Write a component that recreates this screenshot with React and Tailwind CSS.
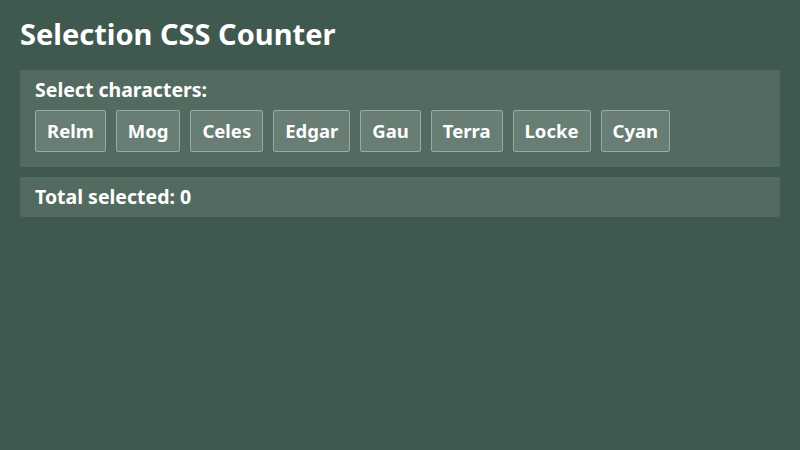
const characters = ["Relm", "Mog", "Celes", "Edgar", "Gau", "Terra", "Locke", "Cyan"];

export default function App() {
  return (
    <div
      className="min-h-[450px] bg-[#3f594f] px-5 pt-[14px] text-white"
      style={{ fontFamily: '"Noto Sans", "Open Sans", sans-serif' }}
    >
      <h1 className="text-[29px] font-bold leading-[40px]">Selection CSS Counter</h1>
      <div className="mt-4 rounded-[3px] bg-[#536a60] px-[15px] pt-[8px] pb-[15px]">
        <div className="text-[19.5px] font-bold leading-[24px]">Select characters:</div>
        <div className="mt-[8px] flex gap-[10px]">
          {characters.map((name) => (
            <button
              key={name}
              className="h-[42px] rounded-[2px] border border-[#98aaa1] bg-[#687e74] px-[11px] text-[18.5px] font-bold text-white"
            >
              {name}
            </button>
          ))}
        </div>
      </div>
      <div className="mt-[10px] flex h-[40px] items-center rounded-[3px] bg-[#536a60] px-[15px] text-[19.5px] font-bold">
        Total selected: 0
      </div>
    </div>
  );
}
